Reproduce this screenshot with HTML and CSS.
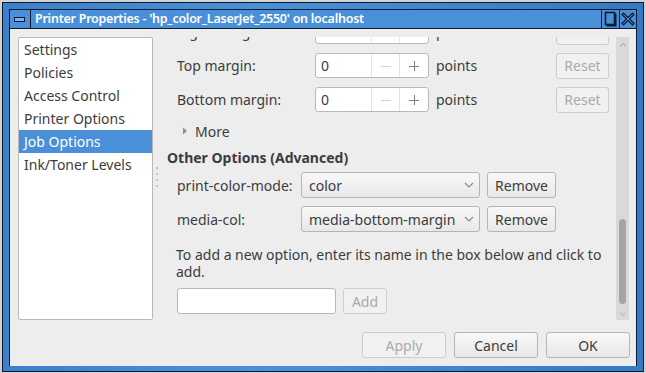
FILE: index.html
```html
<!DOCTYPE html>
<html>
<head>
<meta charset="utf-8">
<link rel="stylesheet" href="styles.css">
</head>
<body>
<div class="frame">
  <div class="win">
    <div class="titlebar">
      <div class="tb-menu"><span class="tb-menu-icon"></span></div>
      <div class="tb-title">Printer Properties - 'hp_color_LaserJet_2550' on localhost</div>
      <div class="tb-btn tb-max">
        <svg width="14" height="16" viewBox="0 0 14 16"><rect x="1.5" y="1.5" width="9" height="12" fill="none" stroke="#0b1a2c" stroke-width="1.6"/><path d="M11.5 2.5v12h-9" fill="none" stroke="#0b1a2c" stroke-width="2"/></svg>
      </div>
      <div class="tb-btn tb-close">
        <svg width="16" height="16" viewBox="0 0 16 16"><path d="M2 3.5 3.5 2 8 6.5 12.5 2 14 3.5 9.5 8 14 12.5 12.5 14 8 9.5 3.5 14 2 12.5 6.5 8z" fill="#4a90d9" stroke="#0b1a2c" stroke-width="1.2" stroke-linejoin="miter"/></svg>
      </div>
    </div>
    <div class="content">
      <div class="main">
        <ul class="sidebar">
          <li>Settings</li>
          <li>Policies</li>
          <li>Access Control</li>
          <li>Printer Options</li>
          <li class="sel">Job Options</li>
          <li>Ink/Toner Levels</li>
        </ul>
        <div class="splitter"><i></i><i></i><i></i><i></i></div>
        <div class="viewport">
          <div class="scroller">
            <div class="mrow">
              <span class="lbl">Right margin:</span>
              <div class="spin"><span class="spin-val">0</span><span class="spin-btn dis"><svg width="10" height="10"><path d="M0 5.5h10" stroke="currentColor"/></svg></span><span class="spin-btn"><svg width="10" height="10"><path d="M0 5.5h10M5.5 0v10" stroke="currentColor"/></svg></span></div>
              <span class="unit">points</span>
              <button class="btn dis reset">Reset</button>
            </div>
            <div class="mrow">
              <span class="lbl">Top margin:</span>
              <div class="spin"><span class="spin-val">0</span><span class="spin-btn dis"><svg width="10" height="10"><path d="M0 5.5h10" stroke="currentColor"/></svg></span><span class="spin-btn"><svg width="10" height="10"><path d="M0 5.5h10M5.5 0v10" stroke="currentColor"/></svg></span></div>
              <span class="unit">points</span>
              <button class="btn dis reset">Reset</button>
            </div>
            <div class="mrow">
              <span class="lbl">Bottom margin:</span>
              <div class="spin"><span class="spin-val">0</span><span class="spin-btn dis"><svg width="10" height="10"><path d="M0 5.5h10" stroke="currentColor"/></svg></span><span class="spin-btn"><svg width="10" height="10"><path d="M0 5.5h10M5.5 0v10" stroke="currentColor"/></svg></span></div>
              <span class="unit">points</span>
              <button class="btn dis reset">Reset</button>
            </div>
            <div class="more"><svg width="6" height="8" viewBox="0 0 6 8"><path d="M1 0.5 5 4 1 7.5z" fill="#8e8e8e"/></svg><span>More</span></div>
            <div class="hdr">Other Options (Advanced)</div>
            <div class="orow">
              <span class="olbl">print-color-mode:</span>
              <div class="combo"><span class="combo-txt">color</span><svg class="chev" width="10" height="6" viewBox="0 0 10 6"><path d="M1 1 5 5 9 1" fill="none" stroke="#8a8a8a" stroke-width="1.2"/></svg></div>
              <button class="btn remove">Remove</button>
            </div>
            <div class="orow">
              <span class="olbl">media-col:</span>
              <div class="combo"><span class="combo-txt">media-bottom-margin</span><svg class="chev" width="10" height="6" viewBox="0 0 10 6"><path d="M1 1 5 5 9 1" fill="none" stroke="#8a8a8a" stroke-width="1.2"/></svg></div>
              <button class="btn remove">Remove</button>
            </div>
            <p class="para">To add a new option, enter its name in the box below and click to<br>add.</p>
            <div class="addrow">
              <div class="entry"></div>
              <button class="btn dis add">Add</button>
            </div>
          </div>
        </div>
        <div class="vscroll">
          <svg class="arr up" width="8" height="5" viewBox="0 0 8 5"><path d="M1 4.5 4 1.5 7 4.5" fill="none" stroke="#b4b4b4" stroke-width="1.2"/></svg>
          <div class="track"><div class="thumb"></div></div>
          <svg class="arr" width="8" height="5" viewBox="0 0 8 5"><path d="M1 0.5 4 3.5 7 0.5" fill="none" stroke="#c0c0c0" stroke-width="1.2"/></svg>
        </div>
      </div>
      <div class="actions">
        <button class="btn dis act">Apply</button>
        <button class="btn act">Cancel</button>
        <button class="btn act">OK</button>
      </div>
    </div>
  </div>
</div>
</body>
</html>
```

FILE: styles.css
```css
* { box-sizing: border-box; }
html, body { margin: 0; padding: 0; }
body {
  width: 646px;
  height: 373px;
  background: #d2d2d2;
  padding: 2px 2px 1px 2px;
  font-family: "Noto Sans", "DejaVu Sans", sans-serif;
  font-size: 14px;
  color: #3c3c3c;
  overflow: hidden;
}
.frame {
  width: 642px;
  height: 370px;
  border: 1px solid #0b1a2c;
  background: linear-gradient(90deg, #3a80cc, #4a90d9 40%, #3579c5);
  padding: 6px 6px 5px 6px;
}
.win {
  height: 100%;
  border: 1px solid #0b1a2c;
  display: flex;
  flex-direction: column;
}
.titlebar {
  height: 19px;
  display: flex;
  background: #4a90d9;
  border-bottom: 1px solid #0b1a2c;
}
.tb-menu {
  width: 21px;
  border-right: 1px solid #0b1a2c;
  display: flex;
  align-items: center;
  justify-content: center;
}
.tb-menu-icon {
  width: 11px;
  height: 5px;
  border: 1.5px solid #0b1a2c;
  background: #7fb2e8;
  margin-right: 1px;
}
.tb-title {
  flex: 1;
  color: #ffffff;
  font-weight: 600;
  font-size: 12.5px;
  line-height: 18px;
  padding-left: 4px;
  white-space: nowrap;
  letter-spacing: -0.25px;
}
.tb-btn {
  width: 18px;
  display: flex;
  align-items: center;
  justify-content: center;
  border-left: 1px solid #0b1a2c;
}
.tb-close { width: 17px; }

.content {
  flex: 1;
  background: #ededed;
  padding: 8px 6px 8px 8px;
  display: flex;
  flex-direction: column;
}
.main {
  height: 283px;
  display: flex;
}
.sidebar {
  list-style: none;
  margin: 0;
  padding: 0;
  width: 135px;
  background: #ffffff;
  border: 1px solid #b9b9b9;
  border-radius: 2px;
}
.sidebar li {
  height: 23px;
  line-height: 23px;
  padding-left: 5px;
  white-space: nowrap;
}
.sidebar li.sel {
  background: #4a90d9;
  color: #ffffff;
}
.splitter {
  width: 7px;
  display: flex;
  flex-direction: column;
  align-items: center;
  padding-top: 130px;
  gap: 4px;
}
.splitter i {
  width: 2px;
  height: 2px;
  background: #c4c4c4;
}
.viewport {
  width: 456px;
  overflow: hidden;
}
.scroller {
  margin-top: -18px;
  display: flex;
  flex-direction: column;
}
.mrow {
  height: 25px;
  display: flex;
  align-items: center;
  margin-bottom: 9px;
  padding-left: 17px;
}
.lbl { width: 138px; white-space: nowrap; }
.spin {
  width: 114px;
  height: 25px;
  display: flex;
  background: #ffffff;
  border: 1px solid #b9b9b9;
  border-radius: 3px;
}
.spin-val {
  flex: 1;
  padding-left: 5px;
  line-height: 23px;
  border-right: 1px solid #e3e3e3;
}
.spin-btn {
  width: 28px;
  display: flex;
  align-items: center;
  justify-content: center;
  color: #7e7e7e;
}
.spin-btn.dis { color: #d4d4d4; border-right: 1px solid #e3e3e3; }
.unit { margin-left: 7px; }
.btn {
  font-family: inherit;
  font-size: 14px;
  color: #3c3c3c;
  background: linear-gradient(#f8f8f8, #e8e8e8);
  border: 1px solid #b5b5b5;
  border-radius: 3px;
  height: 25px;
  padding: 0;
  display: flex;
  align-items: center;
  justify-content: center;
}
.btn.dis {
  color: #aaaaaa;
  background: #f1f1f1;
  border-color: #cdcdcd;
}
.reset {
  width: 53px;
  margin-left: auto;
  margin-right: 7px;
  height: 26px;
}
.more {
  height: 20px;
  display: flex;
  align-items: center;
  padding-left: 22px;
}
.more span { margin-left: 7px; }
.hdr {
  font-weight: 700;
  height: 18px;
  line-height: 18px;
  margin-top: 8px;
  padding-left: 7px;
}
.orow {
  height: 26px;
  display: flex;
  align-items: center;
  margin-top: 5px;
  padding-left: 17px;
}
.orow + .orow { margin-top: 8px; }
.olbl { width: 124px; white-space: nowrap; }
.combo {
  width: 179px;
  height: 26px;
  display: flex;
  align-items: center;
  background: linear-gradient(#f8f8f8, #e8e8e8);
  border: 1px solid #b5b5b5;
  border-radius: 3px;
  padding-left: 7px;
  padding-right: 5px;
}
.combo-txt {
  flex: 1;
  white-space: nowrap;
  overflow: hidden;
}
.chev { flex: none; margin-left: 3px; }
.remove { width: 69px; margin-left: 7px; height: 26px; }
.para {
  margin: 14px 0 0 0;
  padding-left: 16px;
  line-height: 17px;
  white-space: nowrap;
}
.addrow {
  display: flex;
  margin-top: 8px;
  padding-left: 17px;
}
.entry {
  width: 159px;
  height: 26px;
  background: #ffffff;
  border: 1px solid #b9b9b9;
  border-radius: 3px;
}
.add { width: 44px; margin-left: 7px; height: 26px; }
.vscroll {
  width: 13px;
  background: #d9d9d9;
  display: flex;
  flex-direction: column;
  align-items: center;
  padding: 5px 0 4px;
}
.arr { flex: none; }
.track {
  flex: 1;
  width: 100%;
  display: flex;
  justify-content: center;
  padding-top: 172px;
  padding-bottom: 8px;
}
.thumb {
  width: 7px;
  height: 85px;
  background: #a4a4a4;
  border-radius: 4px;
}
.actions {
  display: flex;
  justify-content: flex-end;
  gap: 8px;
  margin-top: 12px;
}
.act { width: 84px; height: 26px; }
```
